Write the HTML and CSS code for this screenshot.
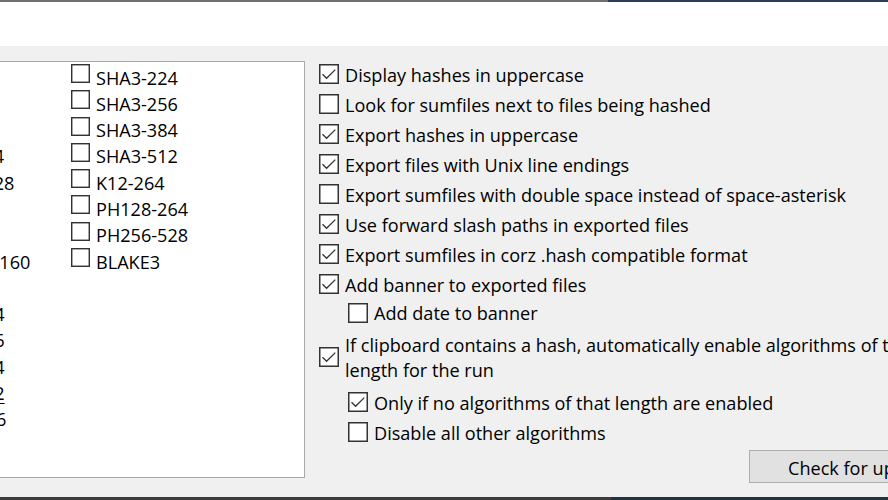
FILE: index.html
```html
<!DOCTYPE html>
<html lang="en">
<head>
<meta charset="utf-8">
<title>Settings</title>
<link rel="stylesheet" href="styles.css">
</head>
<body>
<div class="topbar"><div class="tb-left"></div><div class="tb-right"></div></div>
<div class="titlearea"></div>
<div class="dialog">
  <div class="algos">
    <div class="algo-grid">
      <label class="algo"><svg class="cb" viewBox="0 0 20 20"><rect x="0.75" y="0.75" width="18.5" height="18.5"/></svg><span>CRC32</span></label>
      <label class="algo"><svg class="cb" viewBox="0 0 20 20"><rect x="0.75" y="0.75" width="18.5" height="18.5"/></svg><span>XXH32</span></label>
      <label class="algo"><svg class="cb" viewBox="0 0 20 20"><rect x="0.75" y="0.75" width="18.5" height="18.5"/></svg><span>XXH64</span></label>
      <label class="algo"><svg class="cb" viewBox="0 0 20 20"><rect x="0.75" y="0.75" width="18.5" height="18.5"/></svg><span>XXH3-64</span></label>
      <label class="algo"><svg class="cb" viewBox="0 0 20 20"><rect x="0.75" y="0.75" width="18.5" height="18.5"/></svg><span>XXH3-128</span></label>
      <label class="algo"><svg class="cb" viewBox="0 0 20 20"><rect x="0.75" y="0.75" width="18.5" height="18.5"/></svg><span>MD4</span></label>
      <label class="algo"><svg class="cb" viewBox="0 0 20 20"><rect x="0.75" y="0.75" width="18.5" height="18.5"/></svg><span>MD5</span></label>
      <label class="algo"><svg class="cb" viewBox="0 0 20 20"><rect x="0.75" y="0.75" width="18.5" height="18.5"/></svg><span>RipeMD160</span></label>
      <label class="algo"><svg class="cb" viewBox="0 0 20 20"><rect x="0.75" y="0.75" width="18.5" height="18.5"/></svg><span>SHA-1</span></label>
      <label class="algo"><svg class="cb" viewBox="0 0 20 20"><rect x="0.75" y="0.75" width="18.5" height="18.5"/></svg><span>SHA-224</span></label>
      <label class="algo"><svg class="cb" viewBox="0 0 20 20"><rect x="0.75" y="0.75" width="18.5" height="18.5"/></svg><span>SHA-256</span></label>
      <label class="algo"><svg class="cb" viewBox="0 0 20 20"><rect x="0.75" y="0.75" width="18.5" height="18.5"/></svg><span>SHA-384</span></label>
      <label class="algo"><svg class="cb" viewBox="0 0 20 20"><rect x="0.75" y="0.75" width="18.5" height="18.5"/></svg><span class="focus">SHA-512</span></label>
      <label class="algo"><svg class="cb" viewBox="0 0 20 20"><rect x="0.75" y="0.75" width="18.5" height="18.5"/></svg><span>SM3-256</span></label>
      <label class="algo"><svg class="cb" viewBox="0 0 20 20"><rect x="0.75" y="0.75" width="18.5" height="18.5"/></svg><span>SHA3-224</span></label>
      <label class="algo"><svg class="cb" viewBox="0 0 20 20"><rect x="0.75" y="0.75" width="18.5" height="18.5"/></svg><span>SHA3-256</span></label>
      <label class="algo"><svg class="cb" viewBox="0 0 20 20"><rect x="0.75" y="0.75" width="18.5" height="18.5"/></svg><span>SHA3-384</span></label>
      <label class="algo"><svg class="cb" viewBox="0 0 20 20"><rect x="0.75" y="0.75" width="18.5" height="18.5"/></svg><span>SHA3-512</span></label>
      <label class="algo"><svg class="cb" viewBox="0 0 20 20"><rect x="0.75" y="0.75" width="18.5" height="18.5"/></svg><span>K12-264</span></label>
      <label class="algo"><svg class="cb" viewBox="0 0 20 20"><rect x="0.75" y="0.75" width="18.5" height="18.5"/></svg><span>PH128-264</span></label>
      <label class="algo"><svg class="cb" viewBox="0 0 20 20"><rect x="0.75" y="0.75" width="18.5" height="18.5"/></svg><span>PH256-528</span></label>
      <label class="algo"><svg class="cb" viewBox="0 0 20 20"><rect x="0.75" y="0.75" width="18.5" height="18.5"/></svg><span>BLAKE3</span></label>
    </div>
  </div>
  <div class="options">
    <label class="opt"><svg class="cb" viewBox="0 0 20 20"><rect x="0.75" y="0.75" width="18.5" height="18.5"/><path d="M3.5 10.2 L7.6 14.3 L16.3 5.6"/></svg><span>Display hashes in uppercase</span></label>
    <label class="opt"><svg class="cb" viewBox="0 0 20 20"><rect x="0.75" y="0.75" width="18.5" height="18.5"/></svg><span>Look for sumfiles next to files being hashed</span></label>
    <label class="opt"><svg class="cb" viewBox="0 0 20 20"><rect x="0.75" y="0.75" width="18.5" height="18.5"/><path d="M3.5 10.2 L7.6 14.3 L16.3 5.6"/></svg><span>Export hashes in uppercase</span></label>
    <label class="opt"><svg class="cb" viewBox="0 0 20 20"><rect x="0.75" y="0.75" width="18.5" height="18.5"/><path d="M3.5 10.2 L7.6 14.3 L16.3 5.6"/></svg><span>Export files with Unix line endings</span></label>
    <label class="opt"><svg class="cb" viewBox="0 0 20 20"><rect x="0.75" y="0.75" width="18.5" height="18.5"/></svg><span>Export sumfiles with double space instead of space-asterisk</span></label>
    <label class="opt"><svg class="cb" viewBox="0 0 20 20"><rect x="0.75" y="0.75" width="18.5" height="18.5"/><path d="M3.5 10.2 L7.6 14.3 L16.3 5.6"/></svg><span>Use forward slash paths in exported files</span></label>
    <label class="opt"><svg class="cb" viewBox="0 0 20 20"><rect x="0.75" y="0.75" width="18.5" height="18.5"/><path d="M3.5 10.2 L7.6 14.3 L16.3 5.6"/></svg><span>Export sumfiles in corz .hash compatible format</span></label>
    <label class="opt"><svg class="cb" viewBox="0 0 20 20"><rect x="0.75" y="0.75" width="18.5" height="18.5"/><path d="M3.5 10.2 L7.6 14.3 L16.3 5.6"/></svg><span>Add banner to exported files</span></label>
    <label class="opt sub short"><svg class="cb" viewBox="0 0 20 20"><rect x="0.75" y="0.75" width="18.5" height="18.5"/></svg><span>Add date to banner</span></label>
    <label class="opt multi"><svg class="cb" viewBox="0 0 20 20"><rect x="0.75" y="0.75" width="18.5" height="18.5"/><path d="M3.5 10.2 L7.6 14.3 L16.3 5.6"/></svg><span>If clipboard contains a hash, automatically enable algorithms of that<br>length for the run</span></label>
    <label class="opt sub"><svg class="cb" viewBox="0 0 20 20"><rect x="0.75" y="0.75" width="18.5" height="18.5"/><path d="M3.5 10.2 L7.6 14.3 L16.3 5.6"/></svg><span>Only if no algorithms of that length are enabled</span></label>
    <label class="opt sub"><svg class="cb" viewBox="0 0 20 20"><rect x="0.75" y="0.75" width="18.5" height="18.5"/></svg><span>Disable all other algorithms</span></label>
    <button class="btn" type="button">Check for updates</button>
  </div>
</div>
<div class="taskbar"><div class="tk-left"></div><div class="tk-right"></div></div>
</body>
</html>
```
FILE: styles.css
```css
html, body {
  margin: 0;
  padding: 0;
}
body {
  width: 888px;
  height: 500px;
  overflow: hidden;
  display: flex;
  flex-direction: column;
  background: #f0f0f0;
  color: #000;
  font-family: "Open Sans", "Noto Sans", sans-serif;
  font-size: 18.1px;
}
.topbar {
  display: flex;
  height: 2px;
  flex: 0 0 2px;
}
.tb-left { flex: 0 0 608px; background: #6f6f6f; }
.tb-right { flex: 1; background: #2c3c57; }
.titlearea {
  flex: 0 0 44px;
  background: #fff;
}
.dialog {
  flex: 0 0 451px;
  display: flex;
  align-items: flex-start;
  background: #f0f0f0;
}
.algos {
  flex: 0 0 auto;
  margin-left: -100px;
  margin-top: 15px;
  width: 403px;
  height: 415px;
  border: 1px solid #a9a9a9;
  background: #fff;
  overflow: hidden;
}
.algo-grid {
  display: grid;
  grid-template-rows: repeat(14, 26.3px);
  grid-auto-flow: column;
  grid-auto-columns: 163px;
  padding-left: 7px;
  padding-top: 1px;
}
.algo {
  display: flex;
  align-items: flex-start;
  gap: 6px;
  line-height: 26.3px;
  white-space: nowrap;
}
.algo span {
  padding-top: 1.5px;
}
.algo .cb {
  width: 19px;
  height: 19px;
  margin-top: 1px;
}
.focus {
  text-decoration: underline;
  text-underline-offset: 3px;
}
.cb {
  flex: 0 0 auto;
  display: block;
}
.cb rect {
  fill: #fff;
  stroke: #333;
  stroke-width: 1.5;
}
.cb path {
  fill: none;
  stroke: #333;
  stroke-width: 1.3;
}
.options {
  flex: 0 0 auto;
  margin-left: 14px;
  padding-top: 13.3px;
  display: flex;
  flex-direction: column;
  align-items: flex-start;
}
.opt {
  display: flex;
  align-items: center;
  gap: 6px;
  height: 30px;
  line-height: 25px;
  white-space: nowrap;
}
.opt span {
  padding-top: 2px;
}
.opt .cb {
  width: 20px;
  height: 20px;
}
.opt.sub { padding-left: 29px; }
.opt.short { height: 27px; }
.opt.multi { height: 61px; }
.btn {
  margin-left: 430px;
  margin-top: 3px;
  height: 33px;
  padding: 2px 38px 0;
  background: #e1e1e1;
  border: 1px solid #adadad;
  border-radius: 0;
  font: inherit;
  color: #000;
  white-space: nowrap;
}
.taskbar {
  flex: 0 0 3px;
  display: flex;
}
.tk-left { flex: 0 0 611px; background: #3c3c3c; }
.tk-right { flex: 1; background: #1e3542; }
```
